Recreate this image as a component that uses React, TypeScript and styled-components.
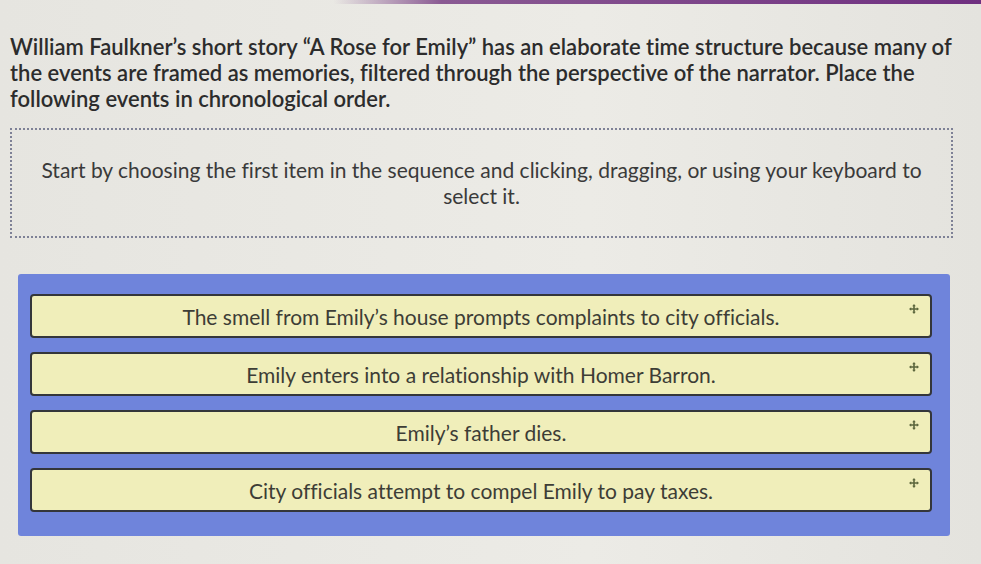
import React from "react";
import styled, { createGlobalStyle } from "styled-components";

const GlobalStyle = createGlobalStyle`
  html, body {
    margin: 0;
    padding: 0;
    background: #e8e7e2;
  }
  body {
    font-family: Lato, "Noto Sans", "Liberation Sans", sans-serif;
    font-variant-ligatures: none;
    color: #2f2f2f;
  }
`;

const Page = styled.div`
  width: 981px;
  height: 564px;
  overflow: hidden;
  background: linear-gradient(90deg, #e6e5e0 0%, #ecebe6 60%, #e4e3de 100%);
`;

const TopStrip = styled.div`
  height: 4px;
  background: linear-gradient(90deg, transparent 0%, transparent 34%, #8a5a93 45%, #6f2f80 100%);
`;

const Prompt = styled.p`
  margin: 30px 0 0;
  padding: 0 10px;
  font-size: 22px;
  font-weight: 600;
  line-height: 26px;
  color: #2c2c2c;
`;

const Hint = styled.div`
  margin: 16px 0 0 10px;
  width: 943px;
  box-sizing: border-box;
  border: 2px dotted #7e8196;
  padding: 27px 24px;
  text-align: center;
  font-size: 21px;
  line-height: 26px;
  color: #3a3a3a;
`;

const Board = styled.div`
  margin: 36px 0 0 18px;
  width: 932px;
  box-sizing: border-box;
  padding: 20px 18px 24px 12px;
  background: #6f84db;
  border-radius: 3px;
  display: flex;
  flex-direction: column;
  gap: 14px;
`;

const Card = styled.div`
  position: relative;
  height: 44px;
  box-sizing: border-box;
  border: 2px solid #34363a;
  border-radius: 4px;
  background: #f0eeba;
  display: flex;
  align-items: center;
  justify-content: center;
  font-size: 21px;
  color: #3d3d36;
`;

const Grip = styled.svg`
  position: absolute;
  top: 7px;
  right: 10px;
  width: 12px;
  height: 12px;
`;

const MoveIcon = () => (
  <Grip viewBox="0 0 12 12">
    <path
      d="M6 1 L7.8 3.2 H6.8 V5.2 H8.8 V4.2 L11 6 L8.8 7.8 V6.8 H6.8 V8.8 H7.8 L6 11 L4.2 8.8 H5.2 V6.8 H3.2 V7.8 L1 6 L3.2 4.2 V5.2 H5.2 V3.2 H4.2 Z"
      fill="#5b653c"
    />
  </Grip>
);

const events = [
  "The smell from Emily’s house prompts complaints to city officials.",
  "Emily enters into a relationship with Homer Barron.",
  "Emily’s father dies.",
  "City officials attempt to compel Emily to pay taxes.",
];

export default function App() {
  return (
    <Page>
      <GlobalStyle />
      <TopStrip />
      <Prompt>
        William Faulkner’s short story “A Rose for Emily” has an elaborate time
        structure because many of the events are framed as memories, filtered
        through the perspective of the narrator. Place the following events in
        chronological order.
      </Prompt>
      <Hint>
        Start by choosing the first item in the sequence and clicking, dragging,
        or using your keyboard to select it.
      </Hint>
      <Board>
        {events.map((text) => (
          <Card key={text}>
            {text}
            <MoveIcon />
          </Card>
        ))}
      </Board>
    </Page>
  );
}
